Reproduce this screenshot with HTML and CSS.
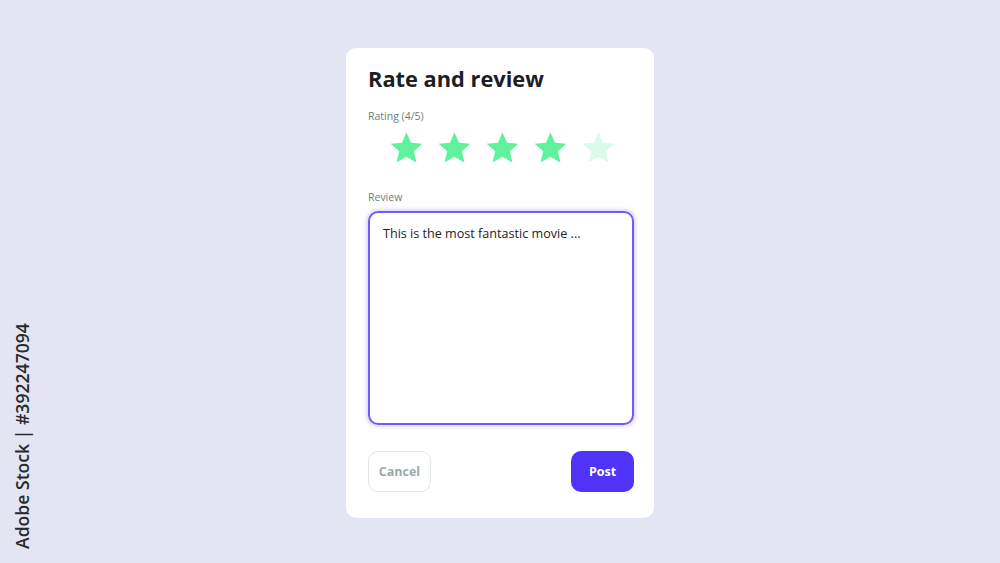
FILE: index.html
```html
<!DOCTYPE html>
<html lang="en">
<head>
<meta charset="utf-8">
<title>Rate and review</title>
<link rel="stylesheet" href="styles.css">
</head>
<body>
  <div class="credit">Adobe Stock | #392247094</div>
  <main class="stage">
    <section class="card">
      <h1 class="title">Rate and review</h1>
      <div class="label">Rating (4/5)</div>
      <div class="stars">
        <svg class="star" viewBox="0 0 24 24"><path d="M12 1.5l3.1 7.2 7.8.7-5.9 5.2 1.8 7.7L12 18.3l-6.8 4 1.8-7.7-5.9-5.2 7.8-.7z"/></svg>
        <svg class="star" viewBox="0 0 24 24"><path d="M12 1.5l3.1 7.2 7.8.7-5.9 5.2 1.8 7.7L12 18.3l-6.8 4 1.8-7.7-5.9-5.2 7.8-.7z"/></svg>
        <svg class="star" viewBox="0 0 24 24"><path d="M12 1.5l3.1 7.2 7.8.7-5.9 5.2 1.8 7.7L12 18.3l-6.8 4 1.8-7.7-5.9-5.2 7.8-.7z"/></svg>
        <svg class="star" viewBox="0 0 24 24"><path d="M12 1.5l3.1 7.2 7.8.7-5.9 5.2 1.8 7.7L12 18.3l-6.8 4 1.8-7.7-5.9-5.2 7.8-.7z"/></svg>
        <svg class="star star-off" viewBox="0 0 24 24"><path d="M12 1.5l3.1 7.2 7.8.7-5.9 5.2 1.8 7.7L12 18.3l-6.8 4 1.8-7.7-5.9-5.2 7.8-.7z"/></svg>
      </div>
      <div class="label label-review">Review</div>
      <div class="review">This is the most fantastic movie ...</div>
      <div class="actions">
        <button class="btn btn-cancel">Cancel</button>
        <button class="btn btn-post">Post</button>
      </div>
    </section>
  </main>
</body>
</html>
```

FILE: styles.css
```css
* { box-sizing: border-box; }

html, body {
  margin: 0;
  padding: 0;
  height: 100%;
}

body {
  background: #e3e6f2;
  font-family: "Open Sans", "Noto Sans", sans-serif;
  color: #1c1f22;
  overflow: hidden;
  position: relative;
}

/* vertical credit line along the left edge */
.credit {
  position: absolute;
  left: 12px;
  top: 549px;
  transform-origin: 0 0;
  transform: rotate(-90deg);
  white-space: nowrap;
  font-size: 17.6px;
  font-weight: 600;
  line-height: 20px;
  color: #2a2a2c;
}

.stage {
  height: 100%;
  display: flex;
  align-items: flex-start;
  justify-content: center;
  padding-top: 48px;
}

.card {
  width: 308px;
  height: 470px;
  background: #ffffff;
  border-radius: 10px;
  padding: 16px 20px 0 22px;
  display: flex;
  flex-direction: column;
}

.title {
  margin: 0;
  font-size: 21.8px;
  font-weight: 700;
  line-height: 30px;
  color: #1d2023;
}

.label {
  margin-top: 15px;
  font-size: 10.5px;
  line-height: 14px;
  color: #6f7c80;
}

.label-review {
  margin-top: 25px;
}

.stars {
  display: flex;
  justify-content: center;
  gap: 13px;
  margin-top: 7px;
  padding-left: 2px;
}

.star {
  width: 35px;
  height: 35px;
  fill: #5ef29c;
}

.star-off {
  fill: #dcfaea;
}

.review {
  margin-top: 7px;
  height: 214px;
  border: 2px solid #6b5cff;
  border-radius: 10px;
  box-shadow: 0 0 4px 1px rgba(122, 100, 255, 0.35);
  padding: 11px 13px;
  font-size: 12.6px;
  line-height: 20px;
  color: #1f2226;
}

.actions {
  display: flex;
  justify-content: space-between;
  margin-top: 26px;
}

.btn {
  font-family: "Open Sans", "Noto Sans", sans-serif;
  font-size: 12.5px;
  font-weight: 700;
  height: 41px;
  width: 63px;
  border-radius: 10px;
  cursor: pointer;
  padding: 0;
}

.btn-cancel {
  background: #ffffff;
  border: 1px solid #e2e6e8;
  color: #9aaaaa;
}

.btn-post {
  background: #4f33f6;
  border: none;
  color: #ffffff;
}
```
